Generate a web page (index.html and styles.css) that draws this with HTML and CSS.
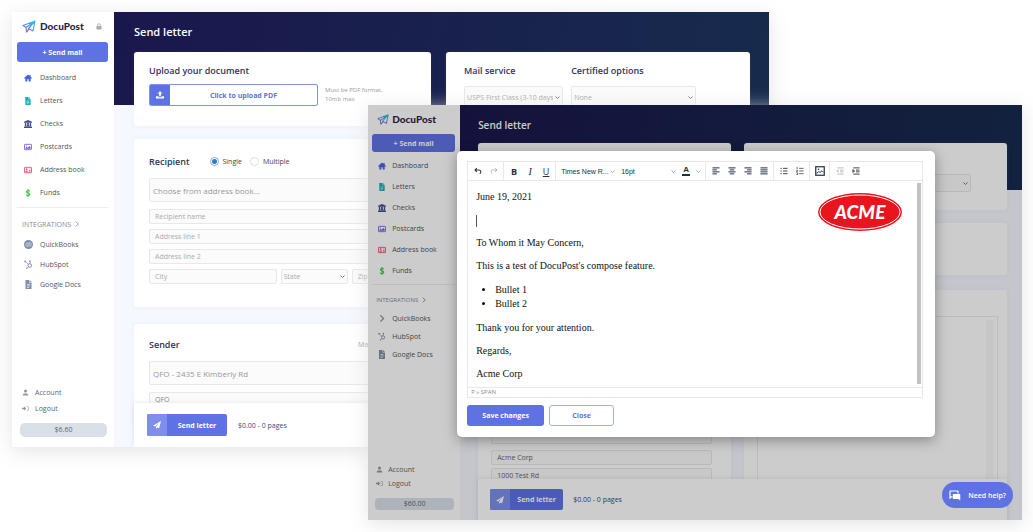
FILE: index.html
```html
<!DOCTYPE html>
<html lang="en">

<head>
    <meta charset="utf-8">
    <title>DocuPost</title>
    <link rel="stylesheet" href="styles.css">
</head>

<body>
    <!-- shared icons -->
    <svg class="sprite" width="0" height="0" aria-hidden="true">
        <defs>
            <linearGradient id="plane-fill" x1="1" y1="0" x2="0.2" y2="1">
                <stop offset="0" stop-color="#2fc6dd" />
                <stop offset="0.5" stop-color="#4a9be8" />
                <stop offset="1" stop-color="#a05be0" />
            </linearGradient>
        </defs>
        <symbol id="logo" viewBox="0 0 28 26">
            <path d="M26 2 L2 11 L8 15 Z M26 2 L8 15 L9 24 L14 18 M26 2 L22 22 L13 17 Z" fill="none" stroke="url(#plane-fill)" stroke-width="2.4" stroke-linejoin="round" />
        </symbol>
        <symbol id="lock" viewBox="0 0 14 16">
            <path d="M3.5 7V5a3.5 3.5 0 0 1 7 0v2" fill="none" stroke="currentColor" stroke-width="2" />
            <rect x="1" y="7" width="12" height="8" rx="1.5" fill="currentColor" />
        </symbol>
        <symbol id="home" viewBox="0 0 18 16">
            <path d="M9 0 0 8 1.500 9.500 3 8.300V16H7.500V11H10.500V16H15V8.300L16.500 9.500 18 8 15 5.300V1.500H12.500V3.100Z" fill="currentColor" />
        </symbol>
        <symbol id="letter" viewBox="0 0 14 18">
            <path d="M1 0H8V5H13V17A1 1 0 0 1 12 18H2A1 1 0 0 1 1 17Z M9 0L13 4H9Z" fill="currentColor" />
            <path d="M4 9H10M4 12H10M4 15H8" stroke="#fff" stroke-width="1.3" />
        </symbol>
        <symbol id="bank" viewBox="0 0 18 18">
            <path d="M9 0 18 4V6H0V4Z M2 7H5V13H7V7H11V13H13V7H16V13H17V15H1V13H2Z M0 16H18V18H0Z" fill="currentColor" />
        </symbol>
        <symbol id="postcard" viewBox="0 0 18 14">
            <rect x="1" y="1" width="16" height="12" rx="1.5" fill="none" stroke="currentColor" stroke-width="2" />
            <path d="M3 11V9L6 6.5 8 8.5 12 4.5 15 7.5V11Z" fill="currentColor" />
            <circle cx="5" cy="4.5" r="1.2" fill="currentColor" />
        </symbol>
        <symbol id="card" viewBox="0 0 18 14">
            <rect x="1" y="1" width="16" height="12" rx="1" fill="none" stroke="currentColor" stroke-width="2" />
            <circle cx="6" cy="5" r="2" fill="currentColor" />
            <path d="M3 11C3 7 9 7 9 11Z M11 4H15V5.5H11Z M11 7H15V8.5H11Z M11 10H15V11H11Z" fill="currentColor" />
        </symbol>
        <symbol id="dollar" viewBox="0 0 12 18">
            <path d="M10 5C9 2.5 2.5 2.5 2.5 6S10 8.5 10 12 3 15.5 2 12.5M6 0V18" fill="none" stroke="currentColor" stroke-width="2.4" />
        </symbol>
        <symbol id="quickbooks" viewBox="0 0 18 18">
            <circle cx="9" cy="9" r="9" fill="currentColor" />
            <path d="M7.5 12.5H6.5A3 3 0 0 1 6.5 6H7.8V14M10.5 5.5H11.5A3 3 0 0 1 11.5 12H10.2V4" fill="none" stroke="#dde3ec" stroke-width="1.4" />
        </symbol>
        <symbol id="hubspot" viewBox="0 0 18 18">
            <circle cx="11.5" cy="11" r="3.6" fill="none" stroke="currentColor" stroke-width="2" />
            <path d="M2 2.5 9 8.5M12 7.5V2M9 13.5 5.5 17" stroke="currentColor" stroke-width="1.6" fill="none" />
            <circle cx="2.2" cy="2.6" r="1.8" fill="currentColor" />
            <circle cx="12" cy="2" r="1.6" fill="currentColor" />
            <circle cx="5.5" cy="16.4" r="1.4" fill="currentColor" />
        </symbol>
        <symbol id="chevron" viewBox="0 0 10 10">
            <path d="M3 1 7 5 3 9" fill="none" stroke="currentColor" stroke-width="1.5" />
        </symbol>
        <symbol id="caret" viewBox="0 0 10 10">
            <path d="M1 3 5 7 9 3" fill="none" stroke="currentColor" stroke-width="1.4" />
        </symbol>
        <symbol id="user" viewBox="0 0 16 16">
            <circle cx="8" cy="4.5" r="3.5" fill="currentColor" />
            <path d="M1.5 15C1.5 8 14.5 8 14.5 15Z" fill="currentColor" />
        </symbol>
        <symbol id="logout" viewBox="0 0 18 14">
            <path d="M0 5H5V1.5L11 7 5 12.5V9H0Z" fill="currentColor" />
            <path d="M12 2H15A1.5 1.5 0 0 1 16.5 3.500V10.500A1.5 1.5 0 0 1 15 12H12" fill="none" stroke="currentColor" stroke-width="1.6" />
        </symbol>
        <symbol id="upload" viewBox="0 0 18 18">
            <path d="M9 0 14.500 6H11V12H7V6H3.500Z M0 12H5.500V14H12.500V12H18V17H0Z" fill="currentColor" />
        </symbol>
        <symbol id="send" viewBox="0 0 18 18">
            <path d="M18 0 0 10.500 4.500 12.500 14 4 6.500 13.200V18L9.300 14.500 13.800 16.500Z" fill="currentColor" />
        </symbol>
        <symbol id="chat" viewBox="0 0 24 22">
            <path d="M18 7V3A1 1 0 0 0 17 2H3A1 1 0 0 0 2 3V16L5 13.500H7" fill="none" stroke="currentColor" stroke-width="2.4" />
            <path d="M9 8H21A1.500 1.500 0 0 1 22.500 9.500V21L19 18H9A1.500 1.500 0 0 1 7.500 16.500V9.500A1.500 1.500 0 0 1 9 8Z" fill="currentColor" />
        </symbol>
        <symbol id="undo" viewBox="0 0 20 20">
            <path d="M7 3 2.500 7.500 7 12M3 7.500H12C18 7.500 18.500 14 14.500 17" fill="none" stroke="currentColor" stroke-width="2.6" />
        </symbol>
        <symbol id="redo" viewBox="0 0 20 20">
            <path d="M13 3 17.500 7.500 13 12M17 7.500H8C2 7.500 1.500 14 5.500 17" fill="none" stroke="currentColor" stroke-width="2.2" />
        </symbol>
        <symbol id="align-left" viewBox="0 0 18 18">
            <path d="M1 2H17M1 6.500H11M1 11H17M1 15.500H11" stroke="currentColor" stroke-width="2.2" />
        </symbol>
        <symbol id="align-center" viewBox="0 0 18 18">
            <path d="M1 2H17M4 6.500H14M1 11H17M4 15.500H14" stroke="currentColor" stroke-width="2.2" />
        </symbol>
        <symbol id="align-right" viewBox="0 0 18 18">
            <path d="M1 2H17M7 6.500H17M1 11H17M7 15.500H17" stroke="currentColor" stroke-width="2.2" />
        </symbol>
        <symbol id="justify" viewBox="0 0 18 18">
            <path d="M1 2H17M1 6.500H17M1 11H17M1 15.500H17" stroke="currentColor" stroke-width="2.2" />
        </symbol>
        <symbol id="bullets" viewBox="0 0 18 18">
            <path d="M1 3H4M1 9H4M1 15H4M7 3H17M7 9H17M7 15H17" stroke="currentColor" stroke-width="2" />
        </symbol>
        <symbol id="numbers" viewBox="0 0 18 18">
            <path d="M2.500 0V5M1 7.500H4L1 11H4M1 13.500H4V17H1M7 3H17M7 9H17M7 15H17" fill="none" stroke="currentColor" stroke-width="1.600" />
        </symbol>
        <symbol id="image" viewBox="0 0 20 20">
            <rect x="1.500" y="1.500" width="17" height="17" fill="none" stroke="currentColor" stroke-width="2.400" />
            <path d="M3 15 7.500 11 10 13 14 9.500 17 12.500" fill="none" stroke="currentColor" stroke-width="1.800" />
            <circle cx="7" cy="6.500" r="1.600" fill="currentColor" />
        </symbol>
        <symbol id="outdent" viewBox="0 0 18 18">
            <path d="M3 2H17M9 7H17M9 11H17M3 16H17M6 6 2 9 6 12" fill="none" stroke="currentColor" stroke-width="1.800" />
        </symbol>
        <symbol id="indent" viewBox="0 0 18 18">
            <path d="M3 2H17M9 7H17M9 11H17M3 16H17M2 6 6 9 2 12Z" fill="none" stroke="currentColor" stroke-width="2" />
        </symbol>
    </svg>

    <div class="desktop">
        <section class="window window-back">
            <aside class="sidebar">
                <div class="brand">
                    <svg class="brand-icon"><use href="#logo" /></svg>
                    <span class="brand-name">DocuPost</span>
                    <svg class="brand-lock"><use href="#lock" /></svg>
                </div>
                <button class="btn btn-mail" type="button">+ Send mail</button>
                <nav class="menu">
                    <a href="#"><svg class="blue"><use href="#home" /></svg>Dashboard</a>
                    <a href="#"><svg class="teal"><use href="#letter" /></svg>Letters</a>
                    <a href="#"><svg class="navy"><use href="#bank" /></svg>Checks</a>
                    <a href="#"><svg class="purple"><use href="#postcard" /></svg>Postcards</a>
                    <a href="#"><svg class="red"><use href="#card" /></svg>Address book</a>
                    <a href="#"><svg class="green"><use href="#dollar" /></svg>Funds</a>
                </nav>
                <h2 class="menu-title">INTEGRATIONS <svg><use href="#chevron" /></svg></h2>
                <nav class="menu menu-small">
                    <a href="#"><svg class="slate"><use href="#quickbooks" /></svg>QuickBooks</a>
                    <a href="#"><svg class="slate"><use href="#hubspot" /></svg>HubSpot</a>
                    <a href="#"><svg class="slate"><use href="#letter" /></svg>Google Docs</a>
                </nav>
                <div class="account">
                    <a href="#"><svg><use href="#user" /></svg>Account</a>
                    <a href="#"><svg><use href="#logout" /></svg>Logout</a>
                    <span class="balance">$6.60</span>
                </div>
            </aside>
            <main class="main">
                <h1>Send letter</h1>
                <div class="columns">
                    <div class="column">
                        <div class="card card-upload">
                            <h3>Upload your document</h3>
                            <div class="upload">
                                <button class="btn-upload" type="button">
                                    <span class="btn-icon"><svg><use href="#upload" /></svg></span>
                                    <span class="btn-text">Click to upload PDF</span>
                                </button>
                                <small>Must be PDF format,<br>10mb max</small>
                            </div>
                        </div>
                        <div class="card card-recipient">
                            <div class="card-head">
                                <h3>Recipient</h3>
                                <label><input type="radio" name="count" checked>Single</label>
                                <label><input type="radio" name="count">Multiple</label>
                            </div>
                            <select class="field field-big" aria-label="Address book"><option>Choose from address book...</option></select>
                            <input class="field" type="text" placeholder="Recipient name" aria-label="Recipient name">
                            <input class="field" type="text" placeholder="Address line 1" aria-label="Address line 1">
                            <input class="field" type="text" placeholder="Address line 2" aria-label="Address line 2">
                            <div class="fields">
                                <input class="field" type="text" placeholder="City" aria-label="City">
                                <select class="field" aria-label="State"><option>State</option></select>
                                <input class="field" type="text" placeholder="Zip" aria-label="Zip">
                            </div>
                        </div>
                        <div class="card card-sender">
                            <div class="card-head">
                                <h3>Sender</h3>
                                <a class="manage" href="#">Manage</a>
                            </div>
                            <select class="field field-big" aria-label="Sender"><option>QFO - 2435 E Kimberly Rd</option></select>
                            <input class="field" type="text" value="QFO" aria-label="Sender name">
                        </div>
                    </div>
                    <div class="column">
                        <div class="card card-service">
                            <div class="service">
                                <label for="service">Mail service</label>
                                <select class="field" id="service"><option>USPS First Class (3-10 days)</option></select>
                            </div>
                            <div class="certified">
                                <label for="certified">Certified options</label>
                                <select class="field" id="certified"><option>None</option></select>
                            </div>
                        </div>
                    </div>
                </div>
                <footer class="bar">
                    <button class="btn-send" type="button">
                        <span class="btn-icon"><svg><use href="#send" /></svg></span>
                        <span class="btn-text">Send letter</span>
                    </button>
                    <span>$0.00 - 0 pages</span>
                </footer>
            </main>
        </section>

        <section class="window window-front">
            <aside class="sidebar">
                <div class="brand">
                    <svg class="brand-icon"><use href="#logo" /></svg>
                    <span class="brand-name">DocuPost</span>
                </div>
                <button class="btn btn-mail" type="button">+ Send mail</button>
                <nav class="menu">
                    <a href="#"><svg class="blue"><use href="#home" /></svg>Dashboard</a>
                    <a href="#"><svg class="teal"><use href="#letter" /></svg>Letters</a>
                    <a href="#"><svg class="navy"><use href="#bank" /></svg>Checks</a>
                    <a href="#"><svg class="purple"><use href="#postcard" /></svg>Postcards</a>
                    <a href="#"><svg class="red"><use href="#card" /></svg>Address book</a>
                    <a href="#"><svg class="green"><use href="#dollar" /></svg>Funds</a>
                </nav>
                <h2 class="menu-title">INTEGRATIONS <svg><use href="#chevron" /></svg></h2>
                <nav class="menu menu-small">
                    <a href="#"><svg class="slate"><use href="#chevron" /></svg>QuickBooks</a>
                    <a href="#"><svg class="slate"><use href="#hubspot" /></svg>HubSpot</a>
                    <a href="#"><svg class="slate"><use href="#letter" /></svg>Google Docs</a>
                </nav>
                <div class="account">
                    <a href="#"><svg><use href="#user" /></svg>Account</a>
                    <a href="#"><svg><use href="#logout" /></svg>Logout</a>
                    <span class="balance">$60.00</span>
                </div>
            </aside>
            <main class="main">
                <h1>Send letter</h1>
                <div class="columns">
                    <div class="column">
                        <div class="card card-upload"></div>
                        <div class="card card-recipient"></div>
                        <div class="card card-sender">
                            <select class="field field-big" aria-label="Sender"></select>
                            <input class="field" type="text" value="Acme Corp" aria-label="Sender name">
                            <input class="field" type="text" value="1000 Test Rd" aria-label="Sender address">
                        </div>
                    </div>
                    <div class="column">
                        <div class="card card-service">
                            <select class="field" aria-label="Certified options"></select>
                        </div>
                        <div class="card card-options"></div>
                        <div class="card card-preview">
                            <div class="preview"></div>
                        </div>
                    </div>
                </div>
                <footer class="bar">
                    <button class="btn-send" type="button">
                        <span class="btn-icon"><svg><use href="#send" /></svg></span>
                        <span class="btn-text">Send letter</span>
                    </button>
                    <span>$0.00 - 0 pages</span>
                </footer>
            </main>

            <!-- compose dialog -->
            <div class="overlay">
                <div class="modal" role="dialog" aria-label="Compose">
                    <div class="editor">
                        <div class="toolbar">
                            <div class="group">
                                <button type="button" title="Undo"><svg><use href="#undo" /></svg></button>
                                <button class="muted" type="button" title="Redo"><svg><use href="#redo" /></svg></button>
                            </div>
                            <div class="group">
                                <button type="button" title="Bold"><b>B</b></button>
                                <button type="button" title="Italic"><i>I</i></button>
                                <button type="button" title="Underline"><u>U</u></button>
                            </div>
                            <div class="group">
                                <button class="pick pick-family" type="button">Times New R...<svg><use href="#caret" /></svg></button>
                                <button class="pick pick-size" type="button">16pt<svg><use href="#caret" /></svg></button>
                                <button class="pick pick-color" type="button" title="Text color"><span class="letter-a">A</span><svg><use href="#caret" /></svg></button>
                            </div>
                            <div class="group">
                                <button type="button" title="Align left"><svg><use href="#align-left" /></svg></button>
                                <button type="button" title="Align center"><svg><use href="#align-center" /></svg></button>
                                <button type="button" title="Align right"><svg><use href="#align-right" /></svg></button>
                                <button type="button" title="Justify"><svg><use href="#justify" /></svg></button>
                            </div>
                            <div class="group">
                                <button type="button" title="Bullet list"><svg><use href="#bullets" /></svg></button>
                                <button type="button" title="Numbered list"><svg><use href="#numbers" /></svg></button>
                            </div>
                            <div class="group">
                                <button type="button" title="Image"><svg class="icon-image"><use href="#image" /></svg></button>
                            </div>
                            <div class="group">
                                <button class="muted" type="button" title="Outdent"><svg><use href="#outdent" /></svg></button>
                                <button type="button" title="Indent"><svg><use href="#indent" /></svg></button>
                            </div>
                        </div>
                        <div class="paper">
                            <div class="letter">
                                <svg class="acme" viewBox="0 0 84 38" role="img" aria-label="ACME">
                                    <ellipse cx="42" cy="19" rx="42" ry="19" fill="#e8151f" />
                                    <ellipse cx="42" cy="19" rx="40" ry="17" fill="none" stroke="#fff" stroke-width="1" />
                                    <text x="42" y="26" text-anchor="middle">ACME</text>
                                </svg>
                                <p>June 19, 2021</p>
                                <p><span class="cursor"></span></p>
                                <p>To Whom it May Concern,</p>
                                <p>This is a test of DocuPost's compose feature.</p>
                                <ul>
                                    <li>Bullet 1</li>
                                    <li>Bullet 2</li>
                                </ul>
                                <p>Thank you for your attention.</p>
                                <p>Regards,</p>
                                <p>Acme Corp</p>
                            </div>
                            <div class="scroll"></div>
                        </div>
                        <div class="status">P » SPAN</div>
                    </div>
                    <div class="actions">
                        <button class="btn btn-save" type="button">Save changes</button>
                        <button class="btn btn-close" type="button">Close</button>
                    </div>
                </div>
                <button class="help" type="button"><svg><use href="#chat" /></svg>Need help?</button>
            </div>
        </section>
    </div>
</body>

</html>
```
FILE: styles.css
```css
* {
    box-sizing: border-box;
}

body {
    margin: 0;
    background: #fff;
    color: #525f7f;
    font-family: "Open Sans", "Noto Sans", sans-serif;
    font-size: 7px;
}

h1, h2, h3, p, ul {
    margin: 0;
}

a {
    color: inherit;
    text-decoration: none;
}

button, input, select {
    margin: 0;
    font: inherit;
    color: inherit;
}

button {
    border: 0;
    padding: 0;
    background: none;
}

svg {
    display: block;
    flex: none;
    width: 8px;
    height: 8px;
}

.sprite {
    position: absolute;
    width: 0;
    height: 0;
}

/* two overlapping app windows */
.desktop {
    position: relative;
    min-height: 532px;
    overflow: hidden;
}

.window {
    --row: 23px;
    --row-small: 20px;
    --pad: 15px;
    position: absolute;
    display: flex;
    background: #f6f8ff;
    box-shadow: 0 4px 18px rgba(225, 225, 225, .9);
    overflow: hidden;
}

.window-back {
    top: 12px;
    left: 12px;
    width: 73.3%;
    height: 435px;
}

.window-front {
    --row: 21px;
    --row-small: 18px;
    --pad: 13px;
    top: 105px;
    right: 11px;
    width: 63.3%;
    height: 415px;
}

/* sidebar */
.sidebar {
    display: flex;
    flex-direction: column;
    flex: none;
    width: 102px;
    padding: 6px 6px 10px 5px;
    background: #fff;
}

.window-front .sidebar {
    width: 92px;
    padding: 6px 5px 10px 4px;
}

.brand {
    display: flex;
    align-items: center;
    gap: 4px;
    height: 16px;
    margin: 0 6px 0 5px;
}

.window-front .brand {
    gap: 3px;
}

.brand-icon {
    width: 14px;
    height: 13px;
}

.window-front .brand-icon {
    width: 12px;
}

.brand-name {
    flex: 1;
    color: #2c1f52;
    font: 900 10px/14px Lato, sans-serif;
}

.brand-lock {
    width: 6px;
    height: 7px;
    color: #aaa;
}

.btn {
    border-radius: 3px;
    background: #5e72e4;
    color: #fff;
    font-weight: 700;
    text-align: center;
}

.btn-mail {
    flex: none;
    height: 20px;
    margin: 8px 0 4px;
}

.window-front .btn-mail {
    height: 18px;
    margin: 7px 0 3px;
}

.menu {
    display: flex;
    flex-direction: column;
    padding-bottom: 3px;
    border-bottom: 1px solid #eee;
}

.menu a {
    display: flex;
    align-items: center;
    gap: 8px;
    height: var(--row);
    padding-left: 7px;
    color: #555;
}

.menu-small {
    padding: 0;
    border: 0;
}

.menu-small a {
    gap: 7px;
    height: var(--row-small);
}

.menu-small svg {
    width: 9px;
    height: 9px;
}

.window-front .menu a {
    gap: 6px;
    padding-left: 6px;
}

.window-front .menu-small svg {
    width: 8px;
}

.menu-title {
    display: flex;
    align-items: center;
    gap: 3px;
    height: 20px;
    margin: 6px 5px 0;
    color: #7f8ba3;
    font-size: 7px;
    font-weight: 400;
}

.window-front .menu-title {
    height: 18px;
    margin: 6px 4px 0;
    font-size: 6px;
}

.menu-title svg {
    width: 6px;
    height: 6px;
}

.blue { color: #4a64dc; }
.teal { color: #18aab4; }
.navy { color: #414d8c; }
.purple { color: #7a5fd0; }
.red { color: #ee4a70; }
.green { color: #35c840; }
.slate { color: #7f8fa6; }

.account {
    display: flex;
    flex-direction: column;
    margin-top: auto;
    color: #666;
}

.account a {
    display: flex;
    align-items: center;
    gap: 6px;
    height: 16px;
    padding-left: 5px;
}

.window-front .account a {
    gap: 5px;
    height: 14px;
    padding-left: 4px;
}

.account svg {
    width: 7px;
    height: 7px;
    color: #999;
}

.balance {
    margin: 7px 1px 0 3px;
    border-radius: 5px;
    background: #d9e0e8;
    line-height: 14px;
    text-align: center;
}

.window-front .balance {
    margin-top: 8px;
    border-radius: 4px;
    line-height: 12px;
}

/* main area */
.main {
    position: relative;
    flex: 1;
    min-width: 0;
    padding: 0 19px 0 20px;
    background: linear-gradient(100deg, #1a174d, #172b4d) no-repeat 0 0 / 100% 93px;
}

.window-front .main {
    padding: 0 15px 0 18px;
    background-size: 100% 85px;
}

.main h1 {
    height: 40px;
    color: #fff;
    font-size: 11px;
    font-weight: 600;
    line-height: 40px;
}

.window-front h1 {
    height: 38px;
    font-size: 10px;
}

.columns {
    display: grid;
    grid-template-columns: 297fr 304fr;
    gap: 15px;
}

.window-front .columns {
    grid-template-columns: 253fr 263fr;
    gap: 13px;
}

.column {
    display: flex;
    flex-direction: column;
    gap: 13px;
    min-width: 0;
}

.card {
    padding: var(--pad);
    border-radius: 3px;
    background: #fff;
    box-shadow: 0 0 4px rgba(136, 152, 170, .1);
}

.card h3,
.card-service label {
    color: #32325d;
    font-size: 9px;
    font-weight: 600;
    line-height: 14px;
}

.card-upload {
    height: 74px;
    padding-top: 12px;
}

.window-front .card-upload,
.window-front .card-service {
    height: 67px;
}

.upload {
    display: flex;
    align-items: center;
    gap: 7px;
    margin-top: 6px;
}

.upload small {
    color: #999;
    font-size: 6px;
    line-height: 9px;
}

.btn-upload,
.btn-send {
    display: flex;
    overflow: hidden;
    height: 22px;
    border-radius: 2px;
    font-weight: 700;
}

.btn-upload {
    width: 169px;
    border: 1px solid #8391ea;
    color: #5e72e4;
}

.btn-icon {
    display: flex;
    align-items: center;
    justify-content: center;
    align-self: stretch;
    width: 20px;
    background: #5e72e4;
    color: #fff;
}

.btn-text {
    flex: 1;
    align-self: center;
}

.card-head {
    display: flex;
    align-items: center;
    height: 15px;
    margin-bottom: 9px;
}

.card-head h3 {
    margin-right: 20px;
}

.card-head label {
    display: flex;
    align-items: center;
    gap: 4px;
    margin-right: 8px;
    color: #444;
}

input[type="radio"] {
    appearance: none;
    width: 9px;
    height: 9px;
    border: 1px solid #ddd;
    border-radius: 50%;
}

input[type="radio"]:checked {
    border-color: #7fb2dc;
    background: radial-gradient(circle, #2b7cc4 0 2px, #fff 3px);
}

.field {
    display: block;
    width: 100%;
    min-width: 0;
    height: 15px;
    margin-bottom: 5px;
    padding: 0 5px;
    border: 1px solid #e8e8e8;
    border-radius: 2px;
    background: #fbfbfb;
    color: #888;
    outline: 0;
}

.field::placeholder {
    color: #aaa;
}

select.field {
    appearance: none;
    padding: 0 9px 0 2px;
    color: #aaa;
    background: #fbfbfb url("data:image/svg+xml,%3Csvg xmlns='http://www.w3.org/2000/svg' viewBox='0 0 10 10'%3E%3Cpath d='M1 3 5 7 9 3' fill='none' stroke='%23777' stroke-width='2'/%3E%3C/svg%3E") no-repeat right 2px center / 5px;
}

.field-big,
select.field-big {
    height: 24px;
    margin-bottom: 7px;
    padding-left: 3px;
    color: #999;
    font-size: 8px;
    background-image: none;
}

.card-recipient {
    padding-bottom: 18px;
}

.fields {
    display: grid;
    grid-template-columns: 127fr 67fr 64fr;
    gap: 4px;
}

.card-sender {
    margin-top: 4px;
    padding: 13px 15px;
}

.manage {
    margin: 0 32px 0 auto;
    color: #999;
}

.card-service {
    display: flex;
    gap: 8px;
    padding: 12px 54px 12px 18px;
}

.card-service label {
    display: block;
    margin-bottom: 8px;
}

.card-service .field {
    height: 22px;
}

.service {
    flex: 99;
    min-width: 0;
}

.certified {
    flex: 125;
    min-width: 0;
}

.window-front .card-service {
    justify-content: flex-end;
    padding: 31px 36px 0 0;
}

.window-front .card-service .field {
    width: 110px;
    height: 18px;
}

.window-front .card-recipient {
    height: 160px;
}

.window-front .card-sender {
    margin: 0;
    padding: 24px 19px 40px 13px;
}

.window-front .field {
    margin-bottom: 3px;
    color: #666;
}

.window-front .field-big {
    margin-bottom: 6px;
}

.card-options {
    height: 52px;
}

.card-preview {
    height: 260px;
    margin-top: 2px;
    padding: 26px 9px 0 13px;
}

.preview {
    height: 100%;
    border: 1px solid #ececec;
    background: linear-gradient(#f8f8f8, #f8f8f8) no-repeat right 3px top 3px / 8px 100%;
}

.bar {
    position: absolute;
    left: 20px;
    right: 19px;
    bottom: 0;
    display: flex;
    align-items: center;
    gap: 11px;
    height: 44px;
    padding-left: 13px;
    background: #fff;
    box-shadow: 0 0 5px rgba(136, 152, 170, .25);
    color: #3c4a78;
}

.window-front .bar {
    left: 18px;
    right: 15px;
    gap: 10px;
    height: 41px;
    padding-left: 12px;
}

.btn-send {
    width: 80px;
    background: #5e72e4;
    color: #fff;
}

.window-front .btn-send {
    width: 73px;
    height: 21px;
}

.btn-send .btn-icon {
    background: #7e8eea;
}

/* compose dialog */
.overlay {
    position: absolute;
    inset: 0;
    display: flex;
    align-items: flex-start;
    justify-content: center;
    padding: 46px 87px 0 89px;
    background: rgba(0, 0, 0, .2);
}

.modal {
    flex: 1;
    padding: 10px 12px 11px 10px;
    border-radius: 5px;
    background: #fff;
    box-shadow: 0 3px 14px rgba(0, 0, 0, .35);
}

.editor {
    border: 1px solid #e8e8e8;
}

.toolbar {
    display: flex;
    height: 19px;
    border-bottom: 1px solid #e8e8e8;
    color: #222f3e;
}

.group {
    display: flex;
    align-items: center;
    padding: 0 1px 0 2px;
    border-right: 1px solid #e8e8e8;
}

.group:last-child {
    border: 0;
}

.group button {
    display: flex;
    align-items: center;
    justify-content: center;
    width: 16px;
    height: 16px;
    font-size: 9px;
}

.group .icon-image {
    width: 10px;
    height: 10px;
}

.group .muted {
    color: #a5abb2;
}

.group i {
    font-family: "Liberation Serif", serif;
    font-size: 10px;
}

.group .pick {
    justify-content: space-between;
    padding: 0 3px;
    font-family: "Liberation Sans", sans-serif;
    font-size: 7px;
}

.pick svg {
    width: 5px;
    height: 5px;
    color: #888;
}

.group .pick-family {
    width: 60px;
}

.group .pick-size {
    width: 61px;
}

.group .pick-color {
    width: 25px;
}

.letter-a {
    border-bottom: 2px solid #222f3e;
    padding: 0 1px;
    font-weight: 700;
    font-size: 8px;
    line-height: 8px;
}

.paper {
    display: flex;
    padding: 2px 1px 3px 8px;
}

.letter {
    flex: 1;
    padding: 7px 0 3px;
    color: #111;
    font: 10px/14px "Liberation Serif", serif;
}

.letter p {
    min-height: 14px;
    margin-bottom: 9px;
}

.letter p:last-child {
    margin-bottom: 0;
}

.letter ul {
    margin: 10px 0;
    padding-left: 19px;
}

.acme {
    float: right;
    width: 84px;
    height: 38px;
    margin: 3px 15px 0 0;
}

.acme text {
    fill: #fff;
    font: italic 900 19px Lato, sans-serif;
}

.cursor {
    display: inline-block;
    width: 1px;
    height: 12px;
    background: #555;
    vertical-align: middle;
}

.scroll {
    width: 4px;
    background: #c1c1c1;
}

.status {
    height: 10px;
    padding-left: 3px;
    border-top: 1px solid #e8e8e8;
    color: #888;
    font-size: 6px;
    line-height: 9px;
}

.actions {
    display: flex;
    gap: 5px;
    margin-top: 7px;
}

.actions .btn {
    height: 21px;
}

.btn-save {
    width: 77px;
}

.actions .btn-close {
    width: 65px;
    border: 1px solid #a3aef0;
    background: #fff;
    color: #5e72e4;
}

.help {
    position: absolute;
    right: 9px;
    bottom: 12px;
    display: flex;
    align-items: center;
    gap: 7px;
    height: 26px;
    padding: 0 7px;
    border-radius: 13px;
    background: #5e72e4;
    color: #fff;
    font-weight: 600;
}

.help svg {
    width: 12px;
    height: 11px;
}
```
